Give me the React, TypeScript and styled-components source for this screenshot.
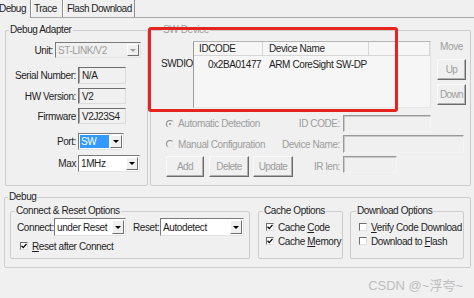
import React from "react";
import styled, { createGlobalStyle } from "styled-components";

const GlobalStyle = createGlobalStyle`
  html, body { margin: 0; padding: 0; background: #f0f0f0; }
  #root { width: 474px; height: 298px; }
`;

const FONT = `"Liberation Sans", Arial, "Noto Sans CJK SC", sans-serif`;
const GRAY = "#9c9c9c";

const Window = styled.div`
  position: relative;
  width: 474px;
  height: 298px;
  overflow: hidden;
  background: #f0f0f0;
  font-family: ${FONT};
  font-size: 10px;
  letter-spacing: -0.4px;
  color: #1e1e1e;
  display: flex;
  flex-direction: column;
`;

const TabBar = styled.div`
  display: flex;
  flex: none;
  height: 18px;
  box-sizing: border-box;
  border-bottom: 1px solid #a9a9a9;
  letter-spacing: -0.5px;
`;

const Tab = styled.div<{ $w: number; $pad: number; $active?: boolean }>`
  box-sizing: border-box;
  flex: none;
  width: ${(p) => p.$w}px;
  height: ${(p) => (p.$active ? 18 : 17)}px;
  padding-left: ${(p) => p.$pad}px;
  text-indent: ${(p) => (p.$active ? -1 : 0)}px;
  line-height: 17px;
  border-right: 1px solid #8f8f8f;
  border-left: ${(p) => (p.$active ? "none" : "1px solid #ffffff")};
  background: #f0f0f0;
  white-space: nowrap;
`;

const TopRow = styled.div`
  display: flex;
  gap: 2px;
  margin-top: 12px;
  padding-left: 5px;
`;

const Group = styled.div<{ $w: number; $h: number; $ml?: number; $mt?: number }>`
  position: relative;
  box-sizing: border-box;
  flex: none;
  width: ${(p) => p.$w}px;
  height: ${(p) => p.$h}px;
  margin-left: ${(p) => p.$ml ?? 0}px;
  margin-top: ${(p) => p.$mt ?? 0}px;
  border: 1px solid #cdcdcd;
  border-radius: 2px;
`;

const GroupTitle = styled.span<{ $x: number; $disabled?: boolean }>`
  position: absolute;
  top: -7px;
  left: ${(p) => p.$x}px;
  line-height: 12px;
  padding: 0 1px;
  background: #f0f0f0;
  white-space: nowrap;
  color: ${(p) => (p.$disabled ? GRAY : "inherit")};
`;

const Stack = styled.div<{ $pt: number; $pl?: number }>`
  display: flex;
  flex-direction: column;
  padding-top: ${(p) => p.$pt}px;
  padding-left: ${(p) => p.$pl ?? 0}px;
`;

const FormRow = styled.div<{ $mt: number; $h: number }>`
  display: flex;
  align-items: center;
  flex: none;
  margin-top: ${(p) => p.$mt}px;
  height: ${(p) => p.$h}px;
`;

const FieldLabel = styled.div<{ $w: number; $disabled?: boolean }>`
  flex: none;
  width: ${(p) => p.$w}px;
  margin-right: 2px;
  text-align: right;
  white-space: nowrap;
  color: ${(p) => (p.$disabled ? GRAY : "inherit")};
`;

const InlineLabel = styled.div<{ $w: number; $ml?: number }>`
  flex: none;
  width: ${(p) => p.$w}px;
  margin-left: ${(p) => p.$ml ?? 0}px;
  white-space: nowrap;
`;

const EditBox = styled.div<{ $w: number; $h?: number; $disabled?: boolean }>`
  box-sizing: border-box;
  flex: none;
  width: ${(p) => p.$w}px;
  height: ${(p) => (p.$h ? `${p.$h}px` : "100%")};
  align-self: ${(p) => (p.$h ? "flex-start" : "auto")};
  margin-left: ${(p) => (p.$disabled ? 3 : 0)}px;
  border: 1px solid;
  border-color: ${(p) =>
    p.$disabled ? "#9a9a9a #f4f4f4 #f4f4f4 #9a9a9a" : "#6e6e6e #dcdcdc #dcdcdc #6e6e6e"};
  box-shadow: ${(p) => (p.$disabled ? "inset 1px 1px 0 #c8c8c8" : "inset 1px 0 0 #a4a4a4")};
  background: #f0f0f0;
  padding-left: 3px;
  display: flex;
  align-items: center;
  white-space: nowrap;
`;

const ComboBox = styled.div<{ $w: number; $disabled?: boolean }>`
  box-sizing: border-box;
  flex: none;
  width: ${(p) => p.$w}px;
  height: 100%;
  display: flex;
  border: 1px solid;
  border-color: #7a7a7a #e3e3e3 #e3e3e3 #7a7a7a;
  background: ${(p) => (p.$disabled ? "#f0f0f0" : "#ffffff")};
  color: ${(p) => (p.$disabled ? GRAY : "inherit")};
`;

const ComboValue = styled.div`
  flex: 1;
  display: flex;
  align-items: center;
  margin: 1px 0 1px 1px;
  padding-left: 1px;
  white-space: nowrap;
  overflow: hidden;
`;

const Selection = styled.div`
  flex: 1;
  display: flex;
  align-items: center;
  margin: 1px 0 1px 1px;
  padding-left: 1px;
  background: #3399ff;
  color: #ffffff;
`;

const DropButton = styled.div`
  box-sizing: border-box;
  flex: none;
  width: 12px;
  margin: 1px;
  border: 1px solid;
  border-color: #ffffff #6f6f6f #6f6f6f #ffffff;
  background: #f0f0f0;
  display: flex;
  align-items: center;
  justify-content: center;
`;

const Arrow = styled.span<{ $disabled?: boolean }>`
  width: 0;
  height: 0;
  border-left: 3px solid transparent;
  border-right: 3px solid transparent;
  border-top: 3px solid ${(p) => (p.$disabled ? "#a0a0a0" : "#000000")};
`;

const SwTop = styled.div`
  display: flex;
  padding: 10px 0 0 10px;
`;

const SwdioLabel = styled.div`
  flex: none;
  width: 32px;
  padding-top: 17px;
  line-height: 12px;
`;

const ListView = styled.div`
  box-sizing: border-box;
  flex: none;
  width: 238px;
  height: 67px;
  border-left: 1px solid #9a9a9a;
  border-top: 1px solid #b4b4b4;
  border-right: 1px solid #e6e6e6;
  border-bottom: 1px solid #e6e6e6;
  background: #f6f6f6;
  display: flex;
  flex-direction: column;
`;

const ListHeader = styled.div`
  display: flex;
  height: 14px;
  box-sizing: border-box;
  border-bottom: 1px solid #d6d6d6;
  line-height: 13px;
`;

const HeaderCell = styled.div<{ $w?: number; $pl: number }>`
  box-sizing: border-box;
  flex: ${(p) => (p.$w ? "none" : "1")};
  width: ${(p) => (p.$w ? `${p.$w}px` : "auto")};
  padding-left: ${(p) => p.$pl}px;
  border-right: 1px solid #d6d6d6;
  white-space: nowrap;
`;

const ListRow = styled.div`
  display: flex;
  margin-top: 2px;
  height: 14px;
  line-height: 14px;
`;

const ListCell = styled.div<{ $w?: number; $pl: number }>`
  box-sizing: border-box;
  flex: ${(p) => (p.$w ? "none" : "1")};
  width: ${(p) => (p.$w ? `${p.$w}px` : "auto")};
  padding-left: ${(p) => p.$pl}px;
  white-space: nowrap;
`;

const MoveCol = styled.div`
  flex: none;
  width: 29px;
  margin-left: 6px;
  display: flex;
  flex-direction: column;
`;

const MoveLabel = styled.div`
  line-height: 12px;
  text-align: center;
  color: ${GRAY};
`;

const WinButton = styled.div<{ $w?: number; $h: number; $mt?: number; $ml?: number }>`
  box-sizing: border-box;
  flex: none;
  width: ${(p) => (p.$w ? `${p.$w}px` : "auto")};
  height: ${(p) => p.$h}px;
  margin-top: ${(p) => p.$mt ?? 0}px;
  margin-left: ${(p) => p.$ml ?? 0}px;
  border: 1px solid;
  border-color: #fafafa #6a6a6a #6a6a6a #fafafa;
  box-shadow: inset -1px -1px 0 #b0b0b0;
  background: #f0f0f0;
  color: ${GRAY};
  letter-spacing: -0.6px;
  display: flex;
  align-items: center;
  justify-content: center;
  white-space: nowrap;
`;

const SwBottom = styled.div`
  display: flex;
  flex-direction: column;
  padding-left: 15px;
`;

const SwRow = styled.div<{ $mt: number; $h: number }>`
  display: flex;
  align-items: center;
  height: ${(p) => p.$h}px;
  margin-top: ${(p) => p.$mt}px;
`;

const SwLeft = styled.div`
  flex: none;
  width: 174px;
  display: flex;
  align-items: center;
  justify-content: space-between;
  align-self: stretch;
`;

const DisabledText = styled.span`
  color: ${GRAY};
  white-space: nowrap;
`;

const Option = styled.div<{ $disabled?: boolean }>`
  display: flex;
  align-items: center;
  height: 12px;
  white-space: nowrap;
  color: ${(p) => (p.$disabled ? GRAY : "inherit")};
`;

const RadioCircle = styled.span<{ $on?: boolean }>`
  box-sizing: border-box;
  flex: none;
  width: 8px;
  height: 8px;
  margin-right: 4px;
  border-radius: 50%;
  border: 1px solid;
  border-color: #8a8a8a #e8e8e8 #e8e8e8 #8a8a8a;
  background: #f0f0f0;
  display: flex;
  align-items: center;
  justify-content: center;
  &::after {
    content: "";
    width: 2px;
    height: 2px;
    border-radius: 50%;
    background: ${(p) => (p.$on ? "#8a8a8a" : "transparent")};
  }
`;

const ButtonRow = styled.div`
  display: flex;
  align-self: flex-end;
`;

const DebugBody = styled.div`
  display: flex;
  padding: 13px 0 0 5px;
`;

const Check = styled.span`
  box-sizing: border-box;
  flex: none;
  width: 8px;
  height: 8px;
  margin-right: 4px;
  border: 1px solid;
  border-color: #6f6f6f #e0e0e0 #e0e0e0 #6f6f6f;
  background: #ffffff;
  display: flex;
  align-items: center;
  justify-content: center;
`;

const OptionList = styled.div<{ $pt: number; $pl: number; $gap: number }>`
  display: flex;
  flex-direction: column;
  gap: ${(p) => p.$gap}px;
  padding-top: ${(p) => p.$pt}px;
  padding-left: ${(p) => p.$pl}px;
`;

const Footer = styled.div`
  display: flex;
  justify-content: flex-end;
  padding-right: 11px;
  margin-top: 10px;
  font-size: 13px;
  letter-spacing: 0;
  line-height: 16px;
  color: #bdbdbd;
`;

const RedMark = styled.div`
  position: absolute;
  left: 148px;
  top: 27px;
  width: 250px;
  height: 85px;
  box-sizing: border-box;
  border: 3px solid #e5231f;
  border-radius: 3px;
  pointer-events: none;
`;

const CheckMark = () => (
  <svg width="6" height="6" viewBox="0 0 6 6">
    <path d="M0.5 2.8 L2.3 4.6 L5.5 0.8" fill="none" stroke="#000" strokeWidth="1.3" />
  </svg>
);

const Combo: React.FC<{ w: number; value: string; disabled?: boolean; selected?: boolean }> = ({
  w,
  value,
  disabled,
  selected,
}) => (
  <ComboBox $w={w} $disabled={disabled}>
    {selected ? <Selection>{value}</Selection> : <ComboValue>{value}</ComboValue>}
    <DropButton>
      <Arrow $disabled={disabled} />
    </DropButton>
  </ComboBox>
);

const CheckOption: React.FC<{ checked?: boolean; children: React.ReactNode }> = ({ checked, children }) => (
  <Option>
    <Check>{checked ? <CheckMark /> : null}</Check>
    <span>{children}</span>
  </Option>
);

export default function App() {
  return (
    <Window>
      <GlobalStyle />
      <TabBar>
        <Tab $w={31} $pad={0} $active>
          Debug
        </Tab>
        <Tab $w={32} $pad={2}>
          Trace
        </Tab>
        <Tab $w={72} $pad={3}>
          Flash Download
        </Tab>
      </TabBar>

      <TopRow>
        <Group $w={143} $h={156}>
          <GroupTitle $x={3}>Debug Adapter</GroupTitle>
          <Stack $pt={11}>
            <FormRow $mt={0} $h={16}>
              <FieldLabel $w={47}>Unit:</FieldLabel>
              <Combo w={86} value="ST-LINK/V2" disabled />
            </FormRow>
            <FormRow $mt={9} $h={17}>
              <FieldLabel $w={70}>Serial Number:</FieldLabel>
              <EditBox $w={48}>N/A</EditBox>
            </FormRow>
            <FormRow $mt={4} $h={16}>
              <FieldLabel $w={70}>HW Version:</FieldLabel>
              <EditBox $w={48}>V2</EditBox>
            </FormRow>
            <FormRow $mt={4} $h={16}>
              <FieldLabel $w={70}>Firmware</FieldLabel>
              <EditBox $w={48}>V2J23S4</EditBox>
            </FormRow>
            <FormRow $mt={9} $h={17}>
              <FieldLabel $w={70}>Port:</FieldLabel>
              <Combo w={46} value="SW" selected />
            </FormRow>
            <FormRow $mt={5} $h={17}>
              <FieldLabel $w={70}>Max</FieldLabel>
              <Combo w={62} value="1MHz" />
            </FormRow>
          </Stack>
        </Group>

        <Group $w={321} $h={156}>
          <GroupTitle $x={11} $disabled>
            SW Device
          </GroupTitle>
          <SwTop>
            <SwdioLabel>SWDIO</SwdioLabel>
            <ListView>
              <ListHeader>
                <HeaderCell $w={69} $pl={5}>
                  IDCODE
                </HeaderCell>
                <HeaderCell $w={106} $pl={6}>
                  Device Name
                </HeaderCell>
                <HeaderCell $pl={4} />
              </ListHeader>
              <ListRow>
                <ListCell $w={69} $pl={14}>
                  0x2BA01477
                </ListCell>
                <ListCell $pl={6}>ARM CoreSight SW-DP</ListCell>
              </ListRow>
            </ListView>
            <MoveCol>
              <MoveLabel>Move</MoveLabel>
              <WinButton $h={21} $mt={6}>
                Up
              </WinButton>
              <WinButton $h={21} $mt={4}>
                Down
              </WinButton>
            </MoveCol>
          </SwTop>
          <SwBottom>
            <SwRow $mt={7} $h={17}>
              <SwLeft>
                <Option $disabled>
                  <RadioCircle $on />
                  Automatic Detection
                </Option>
                <DisabledText>ID CODE:</DisabledText>
              </SwLeft>
              <EditBox $w={88} $disabled />
            </SwRow>
            <SwRow $mt={3} $h={18}>
              <SwLeft>
                <Option $disabled>
                  <RadioCircle />
                  Manual Configuration
                </Option>
                <DisabledText>Device Name:</DisabledText>
              </SwLeft>
              <EditBox $w={121} $disabled />
            </SwRow>
            <SwRow $mt={3} $h={21}>
              <SwLeft>
                <ButtonRow>
                  <WinButton $w={38} $h={21}>
                    Add
                  </WinButton>
                  <WinButton $w={40} $h={21} $ml={5}>
                    Delete
                  </WinButton>
                  <WinButton $w={40} $h={21} $ml={4}>
                    Update
                  </WinButton>
                </ButtonRow>
                <DisabledText>IR len:</DisabledText>
              </SwLeft>
              <EditBox $w={54} $h={17} $disabled />
            </SwRow>
          </SwBottom>
        </Group>
      </TopRow>

      <Group $w={467} $h={71} $ml={4} $mt={11}>
        <GroupTitle $x={3}>Debug</GroupTitle>
        <DebugBody>
          <Group $w={240} $h={48}>
            <GroupTitle $x={4}>Connect &amp; Reset Options</GroupTitle>
            <Stack $pt={6} $pl={6}>
              <FormRow $mt={0} $h={18}>
                <InlineLabel $w={37}>Connect:</InlineLabel>
                <Combo w={72} value="under Reset" />
                <InlineLabel $w={27} $ml={7}>
                  Reset:
                </InlineLabel>
                <Combo w={84} value="Autodetect" />
              </FormRow>
              <OptionList $pt={4} $pl={3} $gap={0}>
                <CheckOption checked>
                  <u>R</u>eset after Connect
                </CheckOption>
              </OptionList>
            </Stack>
          </Group>
          <Group $w={85} $h={48} $ml={8}>
            <GroupTitle $x={4}>Cache Options</GroupTitle>
            <OptionList $pt={9} $pl={7} $gap={2}>
              <CheckOption checked>
                Cache <u>C</u>ode
              </CheckOption>
              <CheckOption checked>
                Cache <u>M</u>emory
              </CheckOption>
            </OptionList>
          </Group>
          <Group $w={114} $h={48} $ml={7}>
            <GroupTitle $x={5}>Download Options</GroupTitle>
            <OptionList $pt={9} $pl={8} $gap={2}>
              <CheckOption>
                <u>V</u>erify Code Download
              </CheckOption>
              <CheckOption>
                Download to <u>F</u>lash
              </CheckOption>
            </OptionList>
          </Group>
        </DebugBody>
      </Group>

      <Footer>CSDN @~浮夸~</Footer>

      <RedMark />
    </Window>
  );
}
